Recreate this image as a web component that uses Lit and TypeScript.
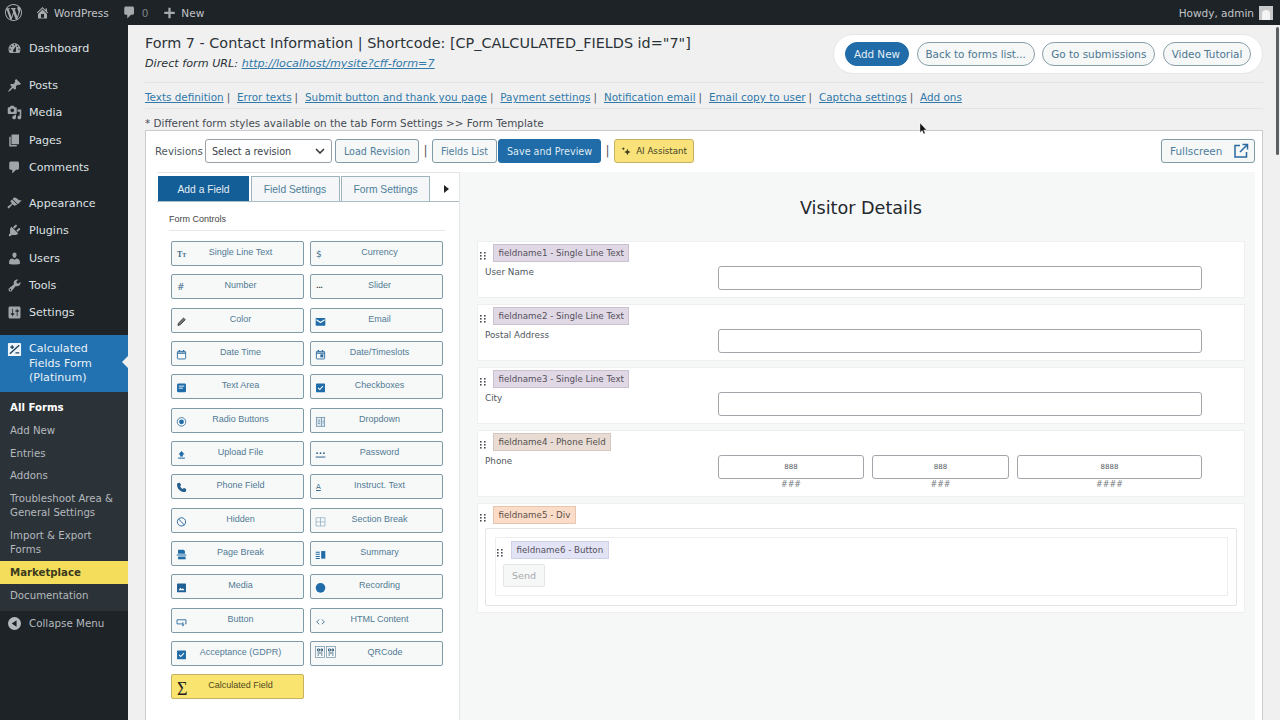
import { LitElement, html, css } from "lit";
import { customElement } from "lit/decorators.js";

const dash = (d: string) => html`<svg viewBox="0 0 20 20" fill="currentColor"><path d=${d}></path></svg>`;

const WP = "M20 10c0-5.51-4.49-10-10-10C4.48 0 0 4.49 0 10c0 5.52 4.48 10 10 10 5.51 0 10-4.48 10-10zM7.78 15.37L4.37 6.22c.55-.02 1.17-.08 1.17-.08.5-.06.44-1.13-.06-1.11 0 0-1.45.11-2.37.11-.18 0-.37 0-.58-.01C4.12 2.69 6.87 1.11 10 1.11c2.33 0 4.45.87 6.05 2.34-.68-.11-1.65.39-1.65 1.58 0 .74.45 1.36.9 2.1.35.61.55 1.36.55 2.46 0 1.49-1.4 5-1.4 5l-3.03-8.37c.54-.02.82-.17.82-.17.5-.05.44-1.25-.06-1.22 0 0-1.44.12-2.38.12-.87 0-2.33-.12-2.33-.12-.5-.03-.56 1.2-.06 1.22l.92.08 1.26 3.41zM17.41 10c.24-.64.74-1.87.43-4.25.7 1.29 1.05 2.71 1.05 4.25 0 3.29-1.73 6.24-4.4 7.78.97-2.59 1.94-5.2 2.92-7.78zM6.1 18.09C3.12 16.65 1.11 13.53 1.11 10c0-1.3.23-2.48.72-3.59C3.25 10.3 4.67 14.2 6.1 18.09zm4.03-6.63l2.58 6.98c-.86.29-1.76.45-2.71.45-.79 0-1.57-.11-2.29-.33.81-2.38 1.62-4.74 2.42-7.1z";
const HOME = "M16 8.5l1.53 1.53-1.06 1.06L10 4.62l-6.47 6.47-1.06-1.06L10 2.5l4 4v-2h2v4zm-6-2.46l6 5.99V18H4v-5.97zM12 17v-5H8v5h4z";
const BUBBLE = "M5 2h9c1.1 0 2 .9 2 2v7c0 1.1-.9 2-2 2h-2l-5 5v-5H5c-1.1 0-2-.9-2-2V4c0-1.1.9-2 2-2z";
const PLUS = "M17 9v3h-5.5v5.5h-3V12H3V9h5.5V3.5h3V9z";

const menu = [
  { label: "Dashboard", gap: "", d: "M3.76 16h12.48c1.1-1.37 1.76-3.11 1.76-5 0-4.42-3.58-8-8-8s-8 3.58-8 8c0 1.89.66 3.63 1.76 5zM10 4c.55 0 1 .45 1 1s-.45 1-1 1-1-.45-1-1 .45-1 1-1zM6 6c.55 0 1 .45 1 1s-.45 1-1 1-1-.45-1-1 .45-1 1-1zm8 0c.55 0 1 .45 1 1s-.45 1-1 1-1-.45-1-1 .45-1 1-1zm-5.37 5.55L12 7v6c0 1.1-.9 2-2 2s-2-.9-2-2c0-.57.24-1.08.63-1.45zM4 10c.55 0 1 .45 1 1s-.45 1-1 1-1-.45-1-1 .45-1 1-1zm12 0c.55 0 1 .45 1 1s-.45 1-1 1-1-.45-1-1 .45-1 1-1z" },
  { label: "Posts", gap: "g1", d: "M10.44 3.02l1.82-1.82 6.36 6.35-1.83 1.82c-1.05-.68-2.48-.57-3.41.36l-.75.75c-.92.93-1.04 2.35-.35 3.41l-1.83 1.82-2.41-2.41-2.8 2.79c-.42.42-3.38 2.71-3.8 2.29s1.86-3.39 2.28-3.81l2.79-2.79L4.1 9.36l1.83-1.82c1.05.69 2.48.57 3.4-.36l.75-.75c.93-.92 1.05-2.35.36-3.41z" },
  { label: "Media", gap: "", d: "M13 11V4c0-.55-.45-1-1-1h-1.67L9 1H5L3.67 3H2c-.55 0-1 .45-1 1v7c0 .55.45 1 1 1h10c.55 0 1-.45 1-1zM7 4.5c1.38 0 2.5 1.12 2.5 2.5S8.38 9.5 7 9.5 4.5 8.38 4.5 7 5.62 4.5 7 4.5zM14 6h5v10.5c0 1.38-1.12 2.5-2.5 2.5S14 17.88 14 16.5s1.12-2.5 2.5-2.5c.17 0 .34.02.5.05V9h-3V6zm-4 8.05V13h2v3.5c0 1.38-1.12 2.5-2.5 2.5S7 17.88 7 16.5 8.12 14 9.5 14c.17 0 .34.02.5.05z" },
  { label: "Pages", gap: "", d: "M6 15V2h10v13H6zm-1 1h8v2H3V5h2v11z" },
  { label: "Comments", gap: "", d: BUBBLE },
  { label: "Appearance", gap: "g2", d: "M14.48 11.06L7.41 3.99l1.5-1.5c.5-.56 2.3-.47 3.51.32 1.21.8 1.43 1.28 2.91 2.1 1.18.64 2.45 1.26 4.45.85zm-.71.71L6.7 4.7 4.93 6.47c-.39.39-.39 1.02 0 1.41l1.06 1.06c.39.39.39 1.03 0 1.42-.6.6-1.43 1.11-2.21 1.69-.35.26-.7.53-1.01.84C1.43 13.23.4 14.08 1.02 15.7c.12.3.25.58.45.79.67.67 1.5-.47 2.78-1.76.31-.31.58-.66.84-1.01.58-.78 1.09-1.61 1.69-2.21.39-.39 1.03-.39 1.42 0l1.06 1.06c.39.39 1.02.39 1.41 0z" },
  { label: "Plugins", gap: "", d: "M13.11 4.36L9.87 7.6 8 5.73l3.24-3.24c.35-.34 1.05-.2 1.56.32.52.51.66 1.21.31 1.55zm-8 1.77l.91-1.12 9.01 9.01-1.19.84c-.71.71-2.63 1.16-3.82 1.16H6.14L4.9 17.26c-.59.59-1.54.59-2.12 0-.59-.58-.59-1.53 0-2.12l1.24-1.24v-3.88c0-1.13.4-3.19 1.09-3.89zm7.26 3.97l3.24-3.24c.34-.35 1.04-.21 1.55.31.52.51.66 1.21.31 1.55l-3.24 3.25z" },
  { label: "Users", gap: "", d: "M10 9.25c-2.27 0-2.73-3.44-2.73-3.44C7 4.02 7.82 2 9.97 2c2.16 0 2.98 2.02 2.71 3.81 0 0-.41 3.44-2.68 3.44zm0 2.57L12.72 10c2.39 0 4.52 2.33 4.52 4.53v2.49s-3.65 1.13-7.24 1.13c-3.65 0-7.24-1.13-7.24-1.13v-2.49c0-2.25 1.94-4.48 4.47-4.48z" },
  { label: "Tools", gap: "", d: "M16.68 9.77c-1.34 1.34-3.3 1.67-4.95.99l-5.41 6.52c-.99.99-2.59.99-3.58 0s-.99-2.59 0-3.57l6.52-5.42c-.68-1.65-.35-3.61.99-4.95 1.28-1.28 3.12-1.62 4.72-1.06l-2.89 2.89 2.82 2.82 2.86-2.87c.53 1.58.18 3.39-1.08 4.65zM3.81 16.21c.4.39 1.04.39 1.43 0 .4-.4.4-1.04 0-1.43-.39-.4-1.03-.4-1.43 0-.39.39-.39 1.03 0 1.43z" },
  { label: "Settings", gap: "", d: "M18 16V4c0-1.1-.9-2-2-2H4c-1.1 0-2 .9-2 2v12c0 1.1.9 2 2 2h12c1.1 0 2-.9 2-2zM8 11h1c.55 0 1 .45 1 1s-.45 1-1 1H8v1.5c0 .28-.22.5-.5.5s-.5-.22-.5-.5V13H6c-.55 0-1-.45-1-1s.45-1 1-1h1V5.5c0-.28.22-.5.5-.5s.5.22.5.5V11zm5-2h-1c-.55 0-1-.45-1-1s.45-1 1-1h1V5.5c0-.28.22-.5.5-.5s.5.22.5.5V7h1c.55 0 1 .45 1 1s-.45 1-1 1h-1v5.5c0 .28-.22.5-.5.5s-.5-.22-.5-.5V9z" },
];

const sub = [
  { label: "All Forms", cls: "cur" },
  { label: "Add New", cls: "" },
  { label: "Entries", cls: "" },
  { label: "Addons", cls: "" },
  { label: "Troubleshoot Area & General Settings", cls: "" },
  { label: "Import & Export Forms", cls: "" },
  { label: "Marketplace", cls: "mkt" },
  { label: "Documentation", cls: "" },
];

const links = ["Texts definition", "Error texts", "Submit button and thank you page", "Payment settings", "Notification email", "Email copy to user", "Captcha settings", "Add ons"];

// small 16x16 icons for the form control buttons
const check = html`<svg viewBox="0 0 16 16"><rect x="1.5" y="2" width="13" height="13" rx="1" fill="#1f6ca8"></rect><path d="M4.5 8.5l2.5 2.5 4.5-5" fill="none" stroke="#fff" stroke-width="1.6"></path></svg>`;
const controls = [
  { label: "Single Line Text", icon: html`<span class="gl tt">T<small>T</small></span>` },
  { label: "Currency", icon: html`<span class="gl">$</span>` },
  { label: "Number", icon: html`<span class="gl">#</span>` },
  { label: "Slider", icon: html`<span class="gl dots">•••</span>` },
  { label: "Color", icon: html`<svg viewBox="0 0 16 16"><path d="M11 3l2.4 2.4-7.4 7.4-3.2.9.8-3.3z" fill="#777" stroke="#333" stroke-width="1.3"></path></svg>` },
  { label: "Email", icon: html`<svg viewBox="0 0 16 16"><rect x="1" y="3" width="14" height="11" rx="1" fill="#1f6ca8"></rect><path d="M2 5.5l6 4 6-4" fill="none" stroke="#fff" stroke-width="1.5"></path></svg>` },
  { label: "Date Time", icon: html`<svg viewBox="0 0 16 16" fill="none" stroke="#2a6a9e" stroke-width="1.3"><rect x="2" y="3.5" width="12" height="11" rx="1"></rect><path d="M2 6h12M5 1.5v2M11 1.5v2" stroke-width="2"></path></svg>` },
  { label: "Date/Timeslots", icon: html`<svg viewBox="0 0 16 16" fill="none" stroke="#2a6a9e" stroke-width="1.3"><rect x="2" y="3.5" width="12" height="11" rx="1"></rect><path d="M2 6h12M5 1.5v2M11 1.5v2" stroke-width="2"></path><rect x="8.5" y="8.5" width="3" height="3" fill="#2a6a9e"></rect></svg>` },
  { label: "Text Area", icon: html`<svg viewBox="0 0 16 16"><rect x="1.5" y="2" width="13" height="13" rx="2" fill="#1f6ca8"></rect><path d="M4 6h8M4 9h6" stroke="#fff" stroke-width="1.3"></path></svg>` },
  { label: "Checkboxes", icon: check },
  { label: "Radio Buttons", icon: html`<svg viewBox="0 0 16 16"><circle cx="8" cy="8.5" r="6.2" fill="none" stroke="#2a6a9e" stroke-width="1.2"></circle><circle cx="8" cy="8.5" r="3.5" fill="#1f6ca8"></circle></svg>` },
  { label: "Dropdown", icon: html`<svg viewBox="0 0 16 16" fill="none" stroke="#6f95ae" stroke-width="1.2"><rect x="2" y="2" width="12" height="13" fill="#e3ebf0"></rect><path d="M9.5 2v13M4 6h3.5M4 8.5h3.5M4 11h3.5M11 7.5h2M11 10h2"></path></svg>` },
  { label: "Upload File", icon: html`<svg viewBox="0 0 16 16" fill="#1f6ca8"><path d="M8 3l4.5 5H10v3H6V8H3.5z"></path><rect x="3" y="12.5" width="10" height="1.5"></rect></svg>` },
  { label: "Password", icon: html`<svg viewBox="0 0 16 16" fill="#2a5f8c"><circle cx="3" cy="6" r="1.3"></circle><circle cx="8" cy="6" r="1.3"></circle><circle cx="13" cy="6" r="1.3"></circle><rect x="1" y="11" width="14" height="1.4"></rect></svg>` },
  { label: "Phone Field", icon: html`<svg viewBox="0 0 16 16" fill="#245f8d"><path d="M3 1.5l2.5-.5 2 3.5-1.5 1.5c.8 1.8 2.2 3.2 4 4l1.5-1.5 3.5 2-.5 2.5c-.2.8-1 1.5-2 1.5C6.5 14.5 1.5 9.5 1.5 3.5c0-1 .7-1.8 1.5-2z"></path></svg>` },
  { label: "Instruct. Text", icon: html`<span class="gl under">A</span>` },
  { label: "Hidden", icon: html`<svg viewBox="0 0 16 16" fill="none" stroke="#2a6a9e" stroke-width="1.4"><circle cx="8" cy="8.5" r="6"></circle><path d="M3.5 4l9 9.5"></path></svg>` },
  { label: "Section Break", icon: html`<svg viewBox="0 0 16 16" fill="none" stroke="#86a6ba" stroke-width="1"><path d="M1.5 2.5h13v12h-13zM1.5 8.5h13M8 2.5v12"></path></svg>` },
  { label: "Page Break", icon: html`<svg viewBox="0 0 16 16" fill="#1f6ca8"><path d="M3 1h8l2 2v4H3z"></path><rect x="1" y="8" width="14" height="1.5"></rect><path d="M3 11h11v4H3z"></path></svg>` },
  { label: "Summary", icon: html`<svg viewBox="0 0 16 16" fill="#1f6ca8"><rect x="9" y="3" width="6" height="11"></rect><path d="M1 4h6v1.5H1zM1 7h6v1.5H1zM1 10h6v1.5H1zM1 13h6v1.5H1z"></path></svg>` },
  { label: "Media", icon: html`<svg viewBox="0 0 16 16"><rect x="1.5" y="2" width="13" height="13" rx="1" fill="#1f5f93"></rect><path d="M3.5 12l3-3.5 2 2 1.5-1.5 2.5 3z" fill="#fff"></path></svg>` },
  { label: "Recording", icon: html`<svg viewBox="0 0 16 16"><circle cx="8" cy="8.5" r="7" fill="#1f6ca8"></circle></svg>` },
  { label: "Button", icon: html`<svg viewBox="0 0 16 16" fill="none" stroke="#2a6a9e" stroke-width="1.3"><path d="M9 11.5H1.5v-6h13v6H13"></path><path d="M10 9v5l1.5-1.5" stroke-width="1.5"></path></svg>` },
  { label: "HTML Content", icon: html`<svg viewBox="0 0 16 16" fill="none" stroke="#3a6c90" stroke-width="1.3"><path d="M6 5L2.5 8.5 6 12M10 5l3.5 3.5L10 12"></path></svg>` },
  { label: "Acceptance (GDPR)", icon: check },
  { label: "QRCode", qr: true, icon: html`<svg class="qr" viewBox="0 0 21 12" fill="none" stroke="#6d8ea4" stroke-width=".7"><rect x=".5" y=".5" width="9" height="11"></rect><rect x="11.5" y=".5" width="9" height="11"></rect><path d="M2.5 3h2v2h-2zM6 3h1.5v2H6zM2.5 7h5M2.5 9h1.5M6 9h1.5M13.5 3h2v2h-2zM17 3h1.5v2H17zM13.5 7h5M13.5 9H15M17 9h1.5" stroke="#3f6780" stroke-width="1"></path></svg>` },
  { label: "Calculated Field", calc: true, icon: html`<span class="sigma">Σ</span>` },
];

const handle = html`<svg class="handle" viewBox="0 0 6 8" fill="#4b4f54"><rect x="0" y="0" width="1.6" height="1.6"></rect><rect x="4" y="0" width="1.6" height="1.6"></rect><rect x="0" y="3" width="1.6" height="1.6"></rect><rect x="4" y="3" width="1.6" height="1.6"></rect><rect x="0" y="6" width="1.6" height="1.6"></rect><rect x="4" y="6" width="1.6" height="1.6"></rect></svg>`;

@customElement("app-root")
export class AppRoot extends LitElement {
  static styles = css`
    :host {
      display: block;
      width: 1280px;
      height: 720px;
      overflow: hidden;
      position: relative;
      background: #f0f0f1;
      font-family: "DejaVu Sans", sans-serif;
      font-size: 11px;
      color: #3c434a;
    }
    * { box-sizing: border-box; }
    svg { display: block; }

    .adminbar {
      height: 25px;
      background: #1d2327;
      color: #c3c4c7;
      display: flex;
      align-items: center;
      padding: 0 6px 0 5px;
      font-size: 10.5px;
    }
    .adminbar svg { width: 15px; height: 15px; color: #a7aaad; }
    .adminbar .logo { width: 17px; height: 17px; margin-right: 13px; }
    .adminbar .logo svg { width: 17px; height: 17px; }
    .adminbar .home { margin-right: 4px; }
    .adminbar .site { margin-right: 13px; }
    .adminbar .bub { margin-right: 5px; }
    .adminbar .count { color: #7d8388; margin-right: 14px; }
    .adminbar .plus { margin-right: 4px; }
    .howdy { margin-left: auto; margin-right: 5px; }
    .avatar {
      width: 14px;
      height: 14px;
      background: #c6c8ca;
      display: flex;
      align-items: flex-end;
      justify-content: center;
      margin-right: 1px;
    }
    .avatar i { display: block; width: 8px; height: 10px; background: #f4f4f4; border-radius: 4px 4px 0 0; }

    .body { display: flex; height: 695px; }

    .side {
      width: 128px;
      flex: none;
      background: #1d2327;
      font-size: 11.1px;
      padding-top: 10px;
    }
    .mi {
      height: 27.3px;
      display: flex;
      align-items: center;
      padding-left: 7px;
      color: #dfe1e3;
    }
    .mi.g1 { margin-top: 9.7px; }
    .mi.g2 { margin-top: 8.6px; }
    .mi svg { width: 15px; height: 15px; margin-right: 7px; color: #a0a5aa; flex: none; }
    .active {
      margin-top: 8.4px;
      background: #2271b1;
      color: #e9f2f8;
      height: 57px;
      display: flex;
      padding: 7.5px 0 0 7px;
      line-height: 14.6px;
      position: relative;
    }
    .active svg { width: 15px; height: 15px; margin: 0 7px 0 0; flex: none; }
    .active::after {
      content: "";
      position: absolute;
      right: 0;
      top: 21px;
      border: 6px solid transparent;
      border-right-color: #f0f0f1;
    }
    .submenu { background: #2c3338; padding: 5px 0 4px; font-size: 10.2px; color: #b4b9be; }
    .si { padding: 4.4px 4px 4.4px 10px; line-height: 14px; }
    .si.cur { color: #fff; font-weight: 700; }
    .si.mkt { background: #f5dd5c; color: #3a3a1c; font-weight: 700; }
    .collapse {
      display: flex;
      align-items: center;
      height: 25px;
      padding-left: 8px;
      color: #b4b9be;
      font-size: 10.3px;
    }
    .collapse svg { width: 13px; height: 13px; margin-right: 8px; }

    .main { flex: 1; min-width: 0; padding: 0 17px; }
    .head {
      height: 58px;
      display: flex;
      justify-content: space-between;
      border-bottom: 1px solid #e2e3e4;
    }
    h1 { margin: 10px 0 0; font-size: 14.4px; font-weight: 400; line-height: 17px; color: #2c3338; white-space: nowrap; }
    .url { margin-top: 4px; font-style: italic; font-size: 11.2px; line-height: 15px; color: #2c3338; }
    .url a, .links a { color: #3179a8; text-decoration: underline; }
    .pill {
      margin-top: 9px;
      height: 40px;
      width: 430px;
      background: #fff;
      border-radius: 20px;
      border: 1px solid #e4e6e7;
      display: flex;
      align-items: center;
      justify-content: space-between;
      padding: 0 11px;
      flex: none;
    }
    .pill span {
      height: 24px;
      border-radius: 12px;
      border: 1px solid #8a9ea8;
      color: #4b7691;
      background: #f6f7f7;
      font-size: 10.4px;
      display: flex;
      align-items: center;
      justify-content: center;
      white-space: nowrap;
    }
    .pill span.on { background: #1f6ca8; border-color: #1f6ca8; color: #e4eef5; }

    .links {
      height: 26px;
      display: flex;
      align-items: center;
      padding-top: 3px;
      border-bottom: 1px solid #e2e3e4;
      font-size: 10.4px;
      white-space: nowrap;
    }
    .links span { margin: 0 6.9px 0 3px; color: #50575e; }
    .note { height: 21px; padding-top: 7px; font-size: 10.4px; line-height: 14px; color: #454b51; }

    .panel {
      background: #fff;
      border: 1px solid #c9cbcd;
      border-bottom: 0;
      height: 600px;
      padding: 8px 7px 0 9px;
    }
    .toolbar { display: flex; align-items: center; height: 24px; font-size: 9.6px; color: #50575e; }
    .toolbar .rev { width: 50px; flex: none; font-size: 10.2px; }
    .select {
      width: 127px;
      height: 24px;
      border: 1px solid #9aa1a6;
      border-radius: 3px;
      background: #fff;
      display: flex;
      align-items: center;
      justify-content: space-between;
      padding: 0 6px 0 6px;
      color: #3c434a;
      margin-right: 3px;
    }
    .select svg { width: 10px; height: 6px; }
    .btn {
      height: 24px;
      display: flex;
      align-items: center;
      justify-content: center;
      border: 1px solid #7f9ba8;
      border-radius: 3px;
      background: #f6f7f7;
      color: #4f7e9b;
      white-space: nowrap;
    }
    .btn.save { background: #1f6ca8; border-color: #1f6ca8; color: #dfeaf2; margin-left: 1px; }
    .btn.ai { background: #f9e27a; border-color: #c4b262; color: #444327; gap: 4px; font-size: 8.7px; }
    .btn.ai svg { width: 11px; height: 11px; }
    .btn.full { margin-left: auto; color: #4f7e9b; font-size: 10.4px; justify-content: space-between; padding: 0 5px 0 8px; }
    .btn.full svg { width: 16px; height: 16px; }
    .sep { margin: 0 4.5px; color: #50575e; font-size: 12px; }

    .work { display: flex; margin-top: 9px; height: 560px; }
    .left {
      width: 303px;
      flex: none;
      margin-left: 2px;
      border-top: 1px solid #e4e5e6;
      border-right: 1px solid #e4e5e6;
    }
    .tabs {
      height: 29px;
      display: flex;
      gap: 1.5px;
      padding-left: 1px;
      border-bottom: 1px solid #a9bbc4;
      font-size: 10.3px;
      align-items: flex-end;
      font-family: "Liberation Sans", sans-serif;
    }
    .tab {
      height: 25px;
      width: 89px;
      display: flex;
      align-items: center;
      justify-content: center;
      background: #f4f6f7;
      border: 1px solid #9fb3bd;
      border-bottom: 0;
      color: #4f7e9b;
    }
    .tab.on { background: #135e96; border-color: #135e96; color: #e3edf4; width: 91px; }
    .tabs .more { width: 0; height: 0; border: 4.5px solid transparent; border-left: 5px solid #222; border-right: 0; margin: 0 0 8px 12px; }
    .controls { padding: 0 14px 0 12px; font-family: "Liberation Sans", sans-serif; }
    .fc { height: 28px; padding-top: 11.5px; font-size: 9px; line-height: 11px; color: #444; }
    .rule { border-top: 1px solid #e8e8e9; }
    .grid { display: grid; grid-template-columns: 133px 133px; column-gap: 6px; row-gap: 8.33px; margin: 10px 0 0 2px; }
    .cb {
      height: 25px;
      border: 1px solid #7f9ba8;
      border-radius: 2px;
      background: #f7f9f9;
      display: flex;
      align-items: center;
      padding-left: 4px;
      color: #517a94;
      font-size: 9px;
    }
    .cb .ico { width: 14px; height: 14px; flex: none; margin: 2px -12px 0 0; color: #2a6a9e; display: flex; align-items: center; justify-content: flex-start; }
    .cb .ico svg { width: 11px; height: 11px; flex: none; }
    .cb .lb { flex: 1; text-align: center; padding-bottom: 3px; }
    .cb.q .lb { padding-left: 11px; }
    .cb.q .ico { align-self: flex-start; margin-top: 3px; }
    .cb.q .ico svg { width: 21px; height: 12px; }
    .cb.calc { background: #f9e46f; border-color: #c4b262; color: #4e4a1c; }
    .gl { font-size: 9px; line-height: 1; color: #3b6a8a; font-family: "DejaVu Sans", sans-serif; margin-left: 1px; }
    .tt { font-weight: 700; font-size: 8px; font-family: "Liberation Serif", serif; }
    .tt small { font-size: 6px; }
    .dots { font-size: 4.5px; letter-spacing: -0.5px; color: #333; }
    .under { font-size: 7px; text-decoration: underline; }
    .sigma { font-family: "Liberation Serif", serif; font-size: 18px; line-height: 1; color: #222; margin: 0 0 -3px 1px; }

    .right { flex: 1; min-width: 0; background: #f6f7f7; padding-left: 17px; padding-right: 10px; }
    h2 { margin: 0; height: 69px; padding-top: 25px; text-align: center; font-size: 17.6px; font-weight: 400; line-height: 22px; color: #23282d; }
    .row {
      background: #fff;
      border: 1px solid #efefef;
      margin-bottom: 6px;
      padding: 2px 7px 0;
    }
    .row.std { height: 57px; }
    .row.ph { height: 67px; }
    .row.dv { height: 110px; }
    .fh { display: flex; align-items: center; height: 18px; }
    .handle { width: 6px; height: 8px; margin: 6px 7px 0 -5px; flex: none; }
    .chip {
      height: 18px;
      padding: 0 4.5px;
      font-size: 8.7px;
      display: flex;
      align-items: center;
      border: 1px solid transparent;
      color: #55505c;
      white-space: nowrap;
    }
    .chip.a { background: #e0d8e5; border-color: #c9c1cf; }
    .chip.b { background: #e8dcd5; border-color: #d6c8bf; color: #55504a; }
    .chip.c { background: #fbdcc8; border-color: #e8c6ad; color: #5c5048; }
    .chip.d { background: #e2e4f6; border-color: #cfd2e6; }
    .fb { display: flex; margin-top: 4px; font-size: 8.8px; color: #50575e; }
    .fb label { width: 233px; flex: none; line-height: 12px; }
    .input { width: 484px; height: 24px; border: 1px solid #a2a6aa; border-radius: 3px; background: #fff; }
    .phones { display: flex; gap: 8px; width: 484px; }
    .phones > div { text-align: center; }
    .phones .input { width: 100%; display: flex; align-items: center; justify-content: center; font-size: 7px; color: #50575e; }
    .phones small { display: block; margin-top: 1px; font-size: 8px; line-height: 9px; color: #787c82; font-style: italic; }
    .outer { border: 1px solid #e3e4e5; border-radius: 2px; margin-top: 4px; height: 78px; padding: 8px 8px 0 9px; }
    .inner { border: 1px solid #eeeeef; height: 59px; padding: 3px 7px 0; }
    .inner .handle { margin-left: -6px; margin-right: 8px; }
    .send {
      width: 42px;
      height: 23px;
      margin-top: 5px;
      border: 1px solid #e3e5e6;
      border-radius: 2px;
      background: #f6f7f7;
      color: #a7aaad;
      font-size: 9.5px;
      display: flex;
      align-items: center;
      justify-content: center;
    }

    .scroll { position: absolute; right: 1px; top: 27px; width: 3px; height: 128px; background: #5c5f62; border-radius: 2px; }
    .cursor { position: absolute; left: 919px; top: 123px; width: 8px; height: 12px; }
  `;

  private field(name: string, cls: string) {
    return html`<div class="fh">${handle}<div class="chip ${cls}">${name}</div></div>`;
  }

  private std(name: string, label: string) {
    return html`<div class="row std">
      ${this.field(name, "a")}
      <div class="fb"><label>${label}</label><div class="input"></div></div>
    </div>`;
  }

  render() {
    return html`
      <div class="adminbar">
        <span class="logo">${dash(WP)}</span>
        <span class="home">${dash(HOME)}</span>
        <span class="site">WordPress</span>
        <span class="bub">${dash(BUBBLE)}</span>
        <span class="count">0</span>
        <span class="plus">${dash(PLUS)}</span>
        <span>New</span>
        <span class="howdy">Howdy, admin</span>
        <span class="avatar"><i></i></span>
      </div>
      <div class="body">
        <nav class="side">
          ${menu.map((m) => html`<div class="mi ${m.gap}">${dash(m.d)}<span>${m.label}</span></div>`)}
          <div class="active">
            <svg viewBox="0 0 16 16"><rect x="1" y="1" width="14" height="14" rx="1" fill="#eef5fa"></rect><path d="M3 12.5L13 3.5M3.5 5.5h4M5.5 3.5v4M9 11.5h4" stroke="#1d3d58" stroke-width="1.4" fill="none"></path></svg>
            <span>Calculated<br />Fields Form<br />(Platinum)</span>
          </div>
          <div class="submenu">
            ${sub.map((s) => html`<div class="si ${s.cls}">${s.label}</div>`)}
          </div>
          <div class="collapse">
            <svg viewBox="0 0 16 16"><circle cx="8" cy="8" r="8" fill="#b4b9be"></circle><path d="M10.5 4v8L4.5 8z" fill="#1d2327"></path></svg>
            <span>Collapse Menu</span>
          </div>
        </nav>
        <main class="main">
          <div class="head">
            <div>
              <h1>Form 7 - Contact Information | Shortcode: [CP_CALCULATED_FIELDS id="7"]</h1>
              <div class="url">Direct form URL: <a>http://localhost/mysite?cff-form=7</a></div>
            </div>
            <div class="pill">
              <span class="on" style="width:64px">Add New</span>
              <span style="width:118px">Back to forms list...</span>
              <span style="width:113px">Go to submissions</span>
              <span style="width:88px">Video Tutorial</span>
            </div>
          </div>
          <div class="links">
            ${links.map((l, i) => html`<a>${l}</a>${i < links.length - 1 ? html`<span>|</span>` : ""}`)}
          </div>
          <div class="note">* Different form styles available on the tab Form Settings &gt;&gt; Form Template</div>
          <section class="panel">
            <div class="toolbar">
              <span class="rev">Revisions</span>
              <div class="select">
                <span>Select a revision</span>
                <svg viewBox="0 0 10 6" fill="none" stroke="#333" stroke-width="1.5"><path d="M1 1l4 4 4-4"></path></svg>
              </div>
              <div class="btn" style="width:84px">Load Revision</div>
              <span class="sep">|</span>
              <div class="btn" style="width:65px">Fields List</div>
              <div class="btn save" style="width:103px">Save and Preview</div>
              <span class="sep">|</span>
              <div class="btn ai" style="width:80px">
                <svg viewBox="0 0 12 12" fill="#3a3a1c"><path d="M7 3l1 2.5 2.5 1-2.5 1L7 10 6 7.5l-2.5-1 2.5-1zM2.5 1L3 2.5 4.5 3 3 3.5 2.5 5 2 3.5.5 3 2 2.5z"></path></svg>
                <span>AI Assistant</span>
              </div>
              <div class="btn full" style="width:94px">
                <span>Fullscreen</span>
                <svg viewBox="0 0 16 16" fill="none" stroke="#2a6a9e" stroke-width="1.5"><path d="M7 2.5H2V14h11.5V9M9.5 1.5h5v5M14.5 1.5L7 9"></path></svg>
              </div>
            </div>
            <div class="work">
              <div class="left">
                <div class="tabs">
                  <div class="tab on">Add a Field</div>
                  <div class="tab">Field Settings</div>
                  <div class="tab">Form Settings</div>
                  <div class="more"></div>
                </div>
                <div class="controls">
                  <div class="fc">Form Controls</div>
                  <div class="rule"></div>
                  <div class="grid">
                    ${controls.map((c: any) => html`<div class="cb ${c.qr ? "q" : ""} ${c.calc ? "calc" : ""}"><span class="ico">${c.icon}</span><span class="lb">${c.label}</span></div>`)}
                  </div>
                </div>
              </div>
              <div class="right">
                <h2>Visitor Details</h2>
                ${this.std("fieldname1 - Single Line Text", "User Name")}
                ${this.std("fieldname2 - Single Line Text", "Postal Address")}
                ${this.std("fieldname3 - Single Line Text", "City")}
                <div class="row ph">
                  ${this.field("fieldname4 - Phone Field", "b")}
                  <div class="fb">
                    <label>Phone</label>
                    <div class="phones">
                      <div style="width:146px"><div class="input">888</div><small>###</small></div>
                      <div style="width:137px"><div class="input">888</div><small>###</small></div>
                      <div style="width:185px"><div class="input">8888</div><small>####</small></div>
                    </div>
                  </div>
                </div>
                <div class="row dv">
                  ${this.field("fieldname5 - Div", "c")}
                  <div class="outer">
                    <div class="inner">
                      ${this.field("fieldname6 - Button", "d")}
                      <div class="send">Send</div>
                    </div>
                  </div>
                </div>
              </div>
            </div>
          </section>
        </main>
      </div>
      <div class="scroll"></div>
      <svg class="cursor" viewBox="0 0 8 12"><path d="M1 0v9.5l2.2-2 1.5 3.500 1.500-.7-1.500-3.300H7.500z" fill="#111" stroke="#fff" stroke-width=".4"></path></svg>
    `;
  }
}
